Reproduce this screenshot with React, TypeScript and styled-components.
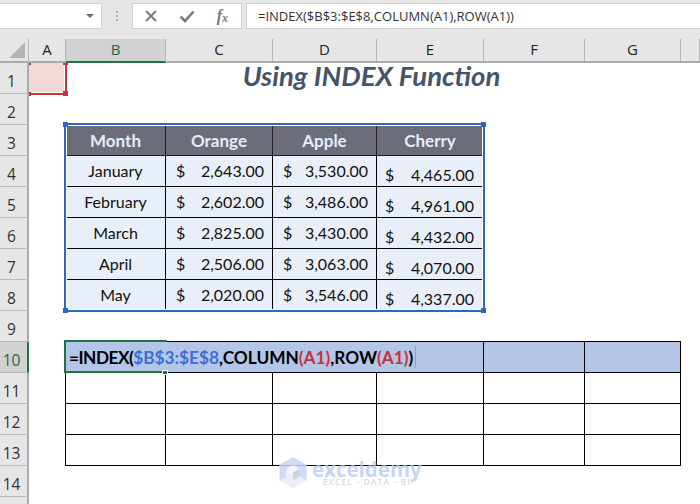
import styled, { createGlobalStyle } from "styled-components";

const columns = ["A", "B", "C", "D", "E", "F", "G", ""];
const rows = [1, 2, 3, 4, 5, 6, 7, 8, 9, 10, 11, 12, 13, 14, 15];

const sales = [
  { month: "January", values: ["2,643.00", "3,530.00", "4,465.00"] },
  { month: "February", values: ["2,602.00", "3,486.00", "4,961.00"] },
  { month: "March", values: ["2,825.00", "3,430.00", "4,432.00"] },
  { month: "April", values: ["2,506.00", "3,063.00", "4,070.00"] },
  { month: "May", values: ["2,020.00", "3,546.00", "4,337.00"] },
];

export default function App() {
  return (
    <>
      <GlobalStyle />
      <Page>
        <FormulaBar>
          <NameBox>
            <Caret />
          </NameBox>
          <Grip>
            <i />
            <i />
            <i />
          </Grip>
          <FormulaButtons>
            <svg width="14" height="14" viewBox="0 0 14 14">
              <path d="M2 2 L12 12 M12 2 L2 12" stroke="#7a7a7a" strokeWidth="2" fill="none" />
            </svg>
            <svg width="16" height="14" viewBox="0 0 16 14">
              <path d="M1.5 7.5 L6 12 L14.5 2.5" stroke="#7a7a7a" strokeWidth="2.6" fill="none" />
            </svg>
            <Fx>
              f<sub>x</sub>
            </Fx>
          </FormulaButtons>
          <FormulaInput>=INDEX($B$3:$E$8,COLUMN(A1),ROW(A1))</FormulaInput>
        </FormulaBar>

        <Sheet>
          <Corner />
          {columns.map((col) => (
            <ColHeader key={col} $active={col === "B"}>
              {col}
            </ColHeader>
          ))}

          {rows.map((row) => (
            <RowCells key={row} row={row} />
          ))}

          <CopySelection>
            <Handle $x="tl" $color="#c5343f" $w={2} $h={2} $flushX $flushY />
            <Handle $x="tr" $color="#c5343f" $h={2} $flushY />
            <Handle $x="bl" $color="#c5343f" $w={2} $h={4} $flushX />
            <Handle $x="br" $color="#c5343f" />
          </CopySelection>
          <RangeSelection>
            <Handle $x="tl" $color="#2f66c4" />
            <Handle $x="tr" $color="#2f66c4" />
            <Handle $x="bl" $color="#2f66c4" />
            <Handle $x="br" $color="#2f66c4" />
          </RangeSelection>
          <ActiveCell>
            <FillHandle />
          </ActiveCell>

          <Watermark>
            <LogoMark width="28" height="31" viewBox="0 0 28 32">
              <path d="M14 0 L28 8 L28 24 L14 32 L0 24 L0 8 Z" fill="#c6d5f6" />
              <path d="M0 24 L14 16 L28 24 L14 32 Z" fill="#e8edfb" />
              <path d="M14 8 L21 12 L21 20 L14 16 L7 20 L7 12 Z" fill="#f2f4fb" />
              <path d="M14 16 L21 12 L21 20 L14 24 Z" fill="#c2c8d8" />
            </LogoMark>
            <WatermarkText>
              <WatermarkName>exceldemy</WatermarkName>
              <WatermarkTag>EXCEL - DATA - BI</WatermarkTag>
            </WatermarkText>
          </Watermark>
        </Sheet>
      </Page>
    </>
  );
}

function RowCells({ row }: { row: number }) {
  const header = <RowHeader $active={row === 10}>{row === 15 ? "" : row}</RowHeader>;

  if (row === 1) {
    return (
      <>
        {header}
        <Cell />
        <TitleCell>Using INDEX Function</TitleCell>
        <Cell />
      </>
    );
  }

  if (row === 3) {
    return (
      <>
        {header}
        <Cell />
        {["Month", "Orange", "Apple", "Cherry"].map((name) => (
          <TableHead key={name}>{name}</TableHead>
        ))}
        <Cell />
        <Cell />
        <Cell />
      </>
    );
  }

  if (row >= 4 && row <= 8) {
    const item = sales[row - 4];
    return (
      <>
        {header}
        <Cell />
        <TableCell>{item.month}</TableCell>
        {item.values.map((value, i) => (
          <AmountCell key={value} $low={i === 2}>
            <span>$</span>
            <span>{value}</span>
          </AmountCell>
        ))}
        <Cell />
        <Cell />
        <Cell />
      </>
    );
  }

  if (row === 9) {
    return (
      <>
        {header}
        <Cell />
        {[0, 1, 2, 3, 4, 5].map((i) => (
          <Cell key={i} $bottom />
        ))}
        <Cell />
      </>
    );
  }

  if (row === 10) {
    return (
      <>
        {header}
        <Cell $right />
        <FormulaCell>
          <FormulaStart>=INDEX(</FormulaStart>
          <RangeRef>$B$3:$E$8</RangeRef>,COLUMN<CellRef>(A1)</CellRef>,ROW<CellRef>(A1)</CellRef>)
          <TextCaret />
        </FormulaCell>
        <BandCell />
        <BandCell />
        <Cell />
      </>
    );
  }

  if (row >= 11 && row <= 13) {
    return (
      <>
        {header}
        <Cell $right />
        {[0, 1, 2, 3, 4, 5].map((i) => (
          <Cell key={i} $right $bottom />
        ))}
        <Cell />
      </>
    );
  }

  return (
    <>
      {header}
      {columns.map((col) => (
        <Cell key={col} />
      ))}
    </>
  );
}

const GlobalStyle = createGlobalStyle`
  html, body {
    margin: 0;
    padding: 0;
    overflow: hidden;
    background: #fff;
  }
`;

const Page = styled.div`
  width: 700px;
  height: 504px;
  display: flex;
  flex-direction: column;
  overflow: hidden;
  font-family: "Lato", "Liberation Sans", sans-serif;
`;

const FormulaBar = styled.div`
  height: 39px;
  flex: none;
  box-sizing: border-box;
  padding: 3px 0 10px;
  display: flex;
  background: #e6e6e6;
`;

const NameBox = styled.div`
  width: 102px;
  box-sizing: border-box;
  background: #fff;
  border: 1px solid #d0d0d0;
  border-left: none;
  display: flex;
  align-items: center;
  justify-content: flex-end;
  padding-right: 7px;
`;

const Caret = styled.div`
  width: 0;
  height: 0;
  border-left: 4px solid transparent;
  border-right: 4px solid transparent;
  border-top: 4px solid #707070;
`;

const Grip = styled.div`
  width: 30px;
  display: flex;
  flex-direction: column;
  align-items: center;
  justify-content: center;
  gap: 2px;

  i {
    width: 2px;
    height: 2px;
    background: #b4b4b4;
  }
`;

const FormulaButtons = styled.div`
  width: 110px;
  box-sizing: border-box;
  background: #fff;
  border: 1px solid #d0d0d0;
  display: flex;
  align-items: center;
  justify-content: space-between;
  padding: 0 13px 0 11px;
`;

const Fx = styled.span`
  font-family: "Liberation Serif", serif;
  font-style: italic;
  font-weight: 700;
  font-size: 16px;
  color: #7a7a7a;

  sub {
    font-size: 12px;
    vertical-align: -1px;
  }
`;

const FormulaInput = styled.div`
  flex: 1;
  margin-left: 4px;
  box-sizing: border-box;
  background: #fff;
  border: 1px solid #d0d0d0;
  border-right: none;
  padding-left: 11px;
  display: flex;
  align-items: center;
  font-family: "Open Sans", sans-serif;
  font-size: 13px;
  color: #333;
`;

const Sheet = styled.div`
  position: relative;
  flex: 1;
  display: grid;
  grid-template-columns: 29px 37px 100px 107px 104px 107px 101px 96px 19px;
  grid-template-rows: 24px repeat(15, 31px);
  background: #fff;
`;

const Corner = styled.div`
  background: #e6e6e6;
  border-right: 1px solid #b5b5b5;
  border-bottom: 2px solid #ababab;
  box-sizing: border-box;
  position: relative;

  &::after {
    content: "";
    position: absolute;
    right: 3px;
    bottom: 3px;
    width: 0;
    height: 0;
    border-left: 16px solid transparent;
    border-bottom: 16px solid #b4b4b4;
  }
`;

const ColHeader = styled.div<{ $active?: boolean }>`
  box-sizing: border-box;
  background: ${(p) => (p.$active ? "#d2d2d2" : "#e6e6e6")};
  border-right: 1px solid #b5b5b5;
  border-bottom: 2px solid ${(p) => (p.$active ? "#217346" : "#ababab")};
  display: flex;
  align-items: center;
  justify-content: center;
  padding-bottom: 2px;
  font-family: "Open Sans", sans-serif;
  font-size: 15px;
  color: ${(p) => (p.$active ? "#1d6a40" : "#222")};
`;

const RowHeader = styled.div<{ $active?: boolean }>`
  box-sizing: border-box;
  background: ${(p) => (p.$active ? "#d2d2d2" : "#e6e6e6")};
  border-right: 2px solid ${(p) => (p.$active ? "#217346" : "#ababab")};
  border-bottom: 1px solid #b9b9b9;
  display: flex;
  align-items: center;
  justify-content: center;
  padding: 6px 4px 0 0;
  font-family: "Open Sans", sans-serif;
  font-size: 15.5px;
  color: ${(p) => (p.$active ? "#1d6a40" : "#333")};
`;

const Cell = styled.div<{ $right?: boolean; $bottom?: boolean }>`
  box-sizing: border-box;
  border-right: ${(p) => (p.$right ? "1px solid #000" : "none")};
  border-bottom: ${(p) => (p.$bottom ? "1px solid #000" : "none")};
`;

const TitleCell = styled.div`
  grid-column: span 6;
  display: flex;
  align-items: center;
  justify-content: center;
  padding: 0 4px 6px 0;
  font-size: 27.5px;
  font-weight: 700;
  font-style: italic;
  color: #44546a;
`;

const TableHead = styled.div`
  box-sizing: border-box;
  background: #6b6e78;
  border-right: 1px solid #1e1e1e;
  border-bottom: 1px solid #1e1e1e;
  display: flex;
  align-items: center;
  justify-content: center;
  font-size: 17px;
  font-weight: 700;
  color: #e6edf8;
`;

const TableCell = styled.div`
  box-sizing: border-box;
  background: #e9eff9;
  border-right: 1px solid #000;
  border-bottom: 1px solid #000;
  display: flex;
  align-items: center;
  justify-content: center;
  padding-bottom: 2px;
  font-size: 16px;
  color: #111;
`;

const AmountCell = styled(TableCell)<{ $low?: boolean }>`
  justify-content: space-between;
  padding: ${(p) => (p.$low ? "6px 9px 0 8px" : "0 8px 2px 10px")};
`;

const FormulaCell = styled.div`
  grid-column: span 4;
  box-sizing: border-box;
  background: #b4c6e7;
  border-right: 1px solid #000;
  border-bottom: 1px solid #000;
  padding-left: 3px;
  display: flex;
  align-items: center;
  white-space: pre;
  font-size: 17.25px;
  font-weight: 700;
  color: #000;
`;

const FormulaStart = styled.span`
  letter-spacing: -0.5px;
`;

const RangeRef = styled.span`
  color: #3d6fd0;
`;

const CellRef = styled.span`
  color: #c8303f;
`;

const TextCaret = styled.span`
  width: 1px;
  height: 22px;
  margin-left: 2px;
  background: #8fa3c8;
`;

const BandCell = styled.div`
  box-sizing: border-box;
  background: #b4c6e7;
  border-right: 1px solid #000;
  border-bottom: 1px solid #000;
`;

const CopySelection = styled.div`
  position: absolute;
  left: 29px;
  top: 24px;
  width: 38px;
  height: 32px;
  box-sizing: border-box;
  background: #f4d7d9;
  border-right: 2px solid #c5343f;
  border-bottom: 2px solid #c5343f;
  box-shadow: inset -1px -1px 0 #fff;
`;

const RangeSelection = styled.div`
  position: absolute;
  left: 64px;
  top: 84px;
  width: 421px;
  height: 189px;
  box-sizing: border-box;
  border: 2px solid #2f66c4;
  box-shadow: inset 0 0 0 1px #fff;
  pointer-events: none;
`;

const Handle = styled.span<{
  $x: string;
  $color: string;
  $w?: number;
  $h?: number;
  $flushX?: boolean;
  $flushY?: boolean;
}>`
  position: absolute;
  width: ${(p) => p.$w ?? 5}px;
  height: ${(p) => p.$h ?? 5}px;
  background: ${(p) => p.$color};
  ${(p) => (p.$x[0] === "t" ? `top: ${p.$flushY ? 0 : -3}px;` : "bottom: -3px;")}
  ${(p) => (p.$x[1] === "l" ? `left: ${p.$flushX ? 0 : -3}px;` : "right: -3px;")}
`;

const ActiveCell = styled.div`
  position: absolute;
  left: 64px;
  top: 301px;
  width: 103px;
  height: 33px;
  box-sizing: border-box;
  border: 2px solid #217346;
  border-right: none;
`;

const FillHandle = styled.span`
  position: absolute;
  right: 0;
  bottom: -3px;
  width: 4px;
  height: 3px;
  background: #217346;
  outline: 1px solid #fff;
`;

const Watermark = styled.div`
  position: absolute;
  left: 279px;
  top: 418px;
  display: flex;
  gap: 5px;
  pointer-events: none;
`;

const LogoMark = styled.svg`
  opacity: 0.85;
`;

const WatermarkText = styled.div`
  margin-top: 4px;
  display: flex;
  flex-direction: column;
  align-items: center;
`;

const WatermarkName = styled.div`
  font-family: "Open Sans", sans-serif;
  font-size: 20.5px;
  font-weight: 700;
  line-height: 17px;
  color: rgba(180, 200, 245, 0.75);
`;

const WatermarkTag = styled.div`
  font-family: "Open Sans", sans-serif;
  font-size: 8.5px;
  font-weight: 600;
  line-height: 7px;
  letter-spacing: 1.1px;
  color: #d9d9d9;
`;
